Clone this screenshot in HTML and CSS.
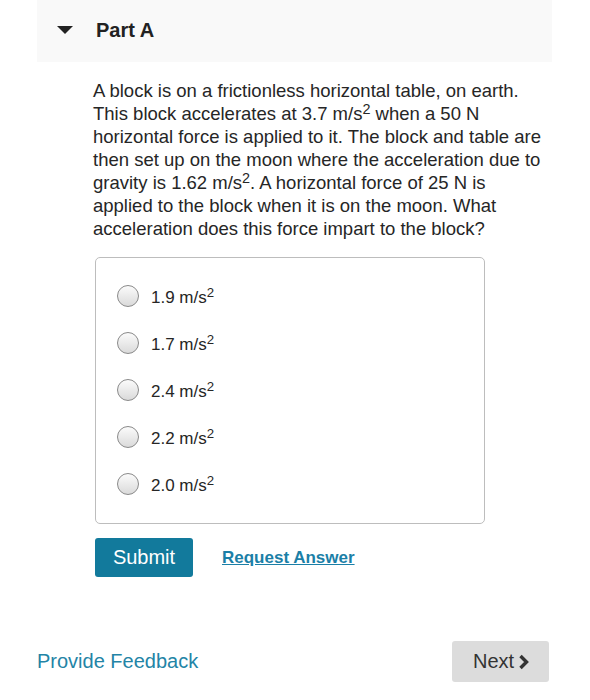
FILE: index.html
```html
<!DOCTYPE html>
<html>
<head>
<meta charset="utf-8">
<link rel="stylesheet" href="styles.css">
</head>
<body>
<div class="header">
  <span class="caret"></span>
  <span class="title">Part A</span>
</div>
<div class="content">
  <p class="question">A block is on a frictionless horizontal table, on earth.<br>This block accelerates at 3.7 m/s<sup>2</sup> when a 50 N<br>horizontal force is applied to it. The block and table are<br>then set up on the moon where the acceleration due to<br>gravity is 1.62 m/s<sup>2</sup>. A horizontal force of 25 N is<br>applied to the block when it is on the moon. What<br>acceleration does this force impart to the block?</p>
  <div class="choices">
    <label class="choice"><span class="radio"></span><span class="val">1.9 m/s<sup>2</sup></span></label>
    <label class="choice"><span class="radio"></span><span class="val">1.7 m/s<sup>2</sup></span></label>
    <label class="choice"><span class="radio"></span><span class="val">2.4 m/s<sup>2</sup></span></label>
    <label class="choice"><span class="radio"></span><span class="val">2.2 m/s<sup>2</sup></span></label>
    <label class="choice"><span class="radio"></span><span class="val">2.0 m/s<sup>2</sup></span></label>
  </div>
  <div class="actions">
    <button class="submit">Submit</button>
    <a class="request" href="#">Request Answer</a>
  </div>
</div>
<div class="footer">
  <a class="feedback" href="#">Provide Feedback</a>
  <button class="next">Next <svg class="chev" viewBox="0 0 12 16" width="12" height="16"><path d="M2.5 2 L8.5 8 L2.5 14" fill="none" stroke="#333" stroke-width="3.4"/></svg></button>
</div>
</body>
</html>
```
FILE: styles.css
```css
html, body {
  margin: 0;
  padding: 0;
  background: #fff;
}
body {
  font-family: "Liberation Sans", Arial, Helvetica, sans-serif;
  color: #222;
  width: 590px;
}
.header {
  margin-left: 37px;
  width: 515px;
  height: 62px;
  background: #f9f9f9;
  display: flex;
  align-items: center;
  box-sizing: border-box;
  padding-left: 20px;
  padding-bottom: 2px;
}
.caret {
  width: 0;
  height: 0;
  border-left: 8.5px solid transparent;
  border-right: 8.5px solid transparent;
  border-top: 8px solid #222;
  margin-right: 23px;
}
.title {
  font-size: 20px;
  font-weight: bold;
  color: #222;
}
.content {
  padding-left: 93px;
  padding-top: 17px;
}
.question {
  margin: 0;
  width: 470px;
  white-space: nowrap;
  font-size: 18.5px;
  line-height: 23px;
  color: #262626;
}
sup {
  font-size: 0.78em;
  line-height: 0;
  vertical-align: 0.45em;
}
.choices {
  margin-top: 17px;
  margin-left: 2px;
  width: 390px;
  height: 267px;
  box-sizing: border-box;
  border: 1px solid #bdbdbd;
  border-radius: 5px;
  padding-top: 27px;
  padding-left: 21px;
  display: flex;
  flex-direction: column;
  gap: 25px;
}
.choice {
  display: flex;
  align-items: center;
  height: 22px;
  font-size: 17px;
  color: #262626;
}
.radio {
  width: 22px;
  height: 22px;
  box-sizing: border-box;
  border-radius: 50%;
  border: 1.5px solid #8a8a8a;
  background: linear-gradient(#fbfbfb, #dadada);
  margin-right: 12px;
  flex: none;
}
.val {
  padding-top: 3px;
}
.actions {
  margin-top: 14px;
  margin-left: 2px;
  display: flex;
  align-items: center;
}
.submit {
  width: 98px;
  height: 39px;
  background: #127a9c;
  color: #fff;
  border: none;
  border-radius: 3px;
  font-family: inherit;
  font-size: 20px;
  padding: 0;
}
.request {
  margin-left: 29px;
  font-size: 17px;
  font-weight: bold;
  color: #1b7fa7;
  text-decoration: underline;
}
.footer {
  margin-top: 64px;
  margin-left: 37px;
  width: 512px;
  display: flex;
  justify-content: space-between;
  align-items: center;
}
.feedback {
  font-size: 20px;
  color: #2384a6;
  text-decoration: none;
}
.next {
  width: 97px;
  height: 41px;
  background: #dcdcdc;
  border: none;
  border-radius: 3px;
  font-family: inherit;
  font-size: 20px;
  color: #333;
  display: flex;
  align-items: center;
  justify-content: center;
  gap: 4px;
  padding: 0 0 0 2px;
}
.chev {
  display: block;
}
```
